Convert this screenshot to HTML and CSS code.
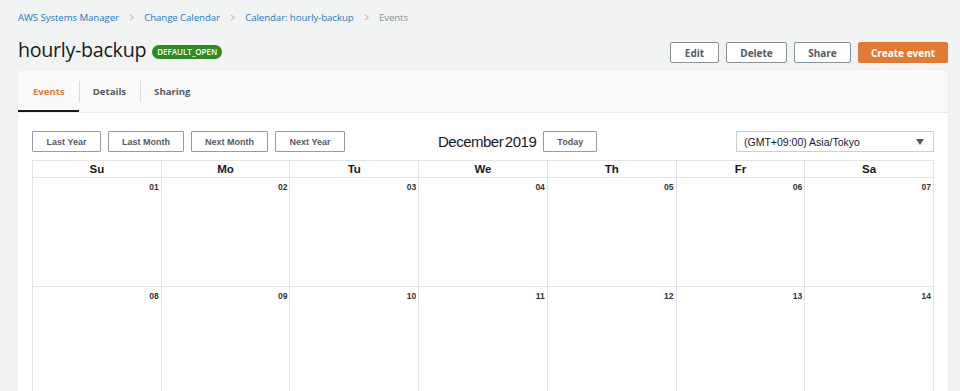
FILE: index.html
```html
<!DOCTYPE html>
<html lang="en">
<head>
    <meta charset="UTF-8">
    <title>hourly-backup - Events</title>
    <link rel="stylesheet" href="styles.css">
</head>
<body>
    <nav class="breadcrumbs">
        <a href="#">AWS Systems Manager</a>
        <span class="crumb-sep">&gt;</span>
        <a href="#">Change Calendar</a>
        <span class="crumb-sep">&gt;</span>
        <a href="#">Calendar: hourly-backup</a>
        <span class="crumb-sep">&gt;</span>
        <span class="crumb-current">Events</span>
    </nav>

    <header class="page-header">
        <div class="title-wrap">
            <h1>hourly-backup</h1>
            <span class="badge">DEFAULT_OPEN</span>
        </div>
        <div class="actions">
            <button class="btn">Edit</button>
            <button class="btn">Delete</button>
            <button class="btn">Share</button>
            <button class="btn btn-primary">Create event</button>
        </div>
    </header>

    <div class="card">
        <div class="tabs">
            <a href="#" class="tab active">Events</a>
            <a href="#" class="tab">Details</a>
            <a href="#" class="tab">Sharing</a>
        </div>

        <div class="card-body">
            <div class="cal-toolbar">
                <div class="nav-buttons">
                    <button class="cal-btn">Last Year</button>
                    <button class="cal-btn">Last Month</button>
                    <button class="cal-btn">Next Month</button>
                    <button class="cal-btn">Next Year</button>
                </div>
                <div class="month-label">
                    <span class="month">December 2019</span>
                    <button class="cal-btn">Today</button>
                </div>
                <div class="tz-select">
                    <span>(GMT+09:00) Asia/Tokyo</span>
                    <span class="caret"></span>
                </div>
            </div>

            <div class="calendar">
                <div class="dow">Su</div>
                <div class="dow">Mo</div>
                <div class="dow">Tu</div>
                <div class="dow">We</div>
                <div class="dow">Th</div>
                <div class="dow">Fr</div>
                <div class="dow">Sa</div>

                <div class="day">01</div>
                <div class="day">02</div>
                <div class="day">03</div>
                <div class="day">04</div>
                <div class="day">05</div>
                <div class="day">06</div>
                <div class="day">07</div>

                <div class="day">08</div>
                <div class="day">09</div>
                <div class="day">10</div>
                <div class="day">11</div>
                <div class="day">12</div>
                <div class="day">13</div>
                <div class="day">14</div>
            </div>
        </div>
    </div>
</body>
</html>
```

FILE: styles.css
```css
body {
    margin: 0;
    padding: 0 12px 0 18px;
    background: #f2f3f3;
    font-family: "Open Sans", Arial, sans-serif;
    color: #16191f;
    overflow: hidden;
}

.breadcrumbs {
    display: flex;
    align-items: center;
    height: 34px;
    font-size: 9.7px;
    letter-spacing: -0.1px;
}
.breadcrumbs a { color: #2a7ac0; text-decoration: none; }
.crumb-sep {
    color: #aab7b8;
    margin: 0 9px;
    font-size: 13px;
    transform: scaleX(0.65);
}
.crumb-current { color: #879596; }

.page-header {
    display: flex;
    justify-content: space-between;
    align-items: flex-end;
    height: 29px;
}
.title-wrap { display: flex; align-items: center; }
h1 {
    margin: 0;
    font-size: 19.7px;
    font-weight: 400;
    letter-spacing: -0.3px;
    line-height: 26px;
}
.badge {
    margin-left: 6px;
    margin-top: 3px;
    background: #2f8a24;
    color: #fff;
    font-size: 8px;
    font-weight: 600;
    padding: 0 5px;
    height: 14px;
    line-height: 14px;
    border-radius: 7px;
}

.actions { display: flex; gap: 7px; }
.btn {
    height: 21px;
    padding: 0;
    background: #fff;
    border: 1px solid #8b9196;
    border-radius: 2px;
    font-family: "Open Sans", Arial, sans-serif;
    font-size: 10px;
    font-weight: 700;
    color: #545b64;
    white-space: nowrap;
}
.actions .btn:nth-child(1) { width: 49px; }
.actions .btn:nth-child(2) { width: 61px; }
.actions .btn:nth-child(3) { width: 57px; }
.btn-primary {
    width: 90px;
    background: #e07a35;
    border-color: #e07a35;
    color: #fff;
}

.card {
    margin-top: 8px;
    background: #fff;
    box-shadow: 0 1px 1px rgba(0, 28, 36, 0.2);
    height: 330px;
}
.tabs {
    display: flex;
    align-items: center;
    height: 41px;
    background: #fafafa;
    border-bottom: 1px solid #eaeded;
}
.tab {
    position: relative;
    display: flex;
    align-items: center;
    height: 41px;
    padding: 0 14px;
    font-size: 9.6px;
    font-weight: 700;
    color: #545b64;
    text-decoration: none;
}
.tab + .tab::before {
    content: "";
    position: absolute;
    left: 0;
    top: 10px;
    bottom: 10px;
    border-left: 1px solid #dadcdc;
}
.tab:first-child { padding: 0 14px 0 15px; }
.tab.active { color: #e07a35; box-shadow: inset 0 -2px 0 #16191f; }

.card-body { padding: 18px 14px 0; }

.cal-toolbar {
    display: flex;
    align-items: center;
    height: 21px;
    margin-bottom: 8px;
}
.nav-buttons { display: flex; gap: 7px; }
.cal-btn {
    height: 21px;
    padding: 0;
    background: #fff;
    border: 1px solid #979ca1;
    border-radius: 1px;
    font-family: "Liberation Sans", Arial, sans-serif;
    font-size: 9px;
    font-weight: 700;
    color: #545b64;
}
.nav-buttons .cal-btn:nth-child(1) { width: 69px; }
.nav-buttons .cal-btn:nth-child(2) { width: 76px; }
.nav-buttons .cal-btn:nth-child(3) { width: 77px; }
.nav-buttons .cal-btn:nth-child(4) { width: 70px; }
.month-label {
    display: flex;
    align-items: center;
    margin-left: 93px;
}
.month {
    font-family: "Liberation Sans", Arial, sans-serif;
    font-size: 15px;
    letter-spacing: -0.5px;
    word-spacing: -2px;
    color: #16191f;
    margin-right: 7px;
}
.month-label .cal-btn { width: 54px; }
.tz-select {
    margin-left: auto;
    width: 198px;
    height: 21px;
    box-sizing: border-box;
    border: 1px solid #c9cfd2;
    display: flex;
    align-items: center;
    justify-content: space-between;
    padding: 0 9px 0 7px;
    font-family: "Liberation Sans", Arial, sans-serif;
    font-size: 10.5px;
    color: #16191f;
}
.caret {
    width: 0;
    height: 0;
    border-left: 4px solid transparent;
    border-right: 4px solid transparent;
    border-top: 6px solid #545b64;
}

.calendar {
    display: grid;
    grid-template-columns: repeat(7, 1fr);
    grid-template-rows: 17px 109px 109px;
    border-top: 1px solid #e4e4e4;
    border-left: 1px solid #e4e4e4;
    font-family: "Liberation Sans", Arial, sans-serif;
}
.dow, .day {
    border-right: 1px solid #e4e4e4;
    border-bottom: 1px solid #e4e4e4;
}
.dow {
    text-align: center;
    font-size: 11.5px;
    font-weight: 700;
    line-height: 16px;
}
.day {
    text-align: right;
    padding: 4px 2px 0 0;
    font-size: 8.5px;
    font-weight: 700;
    color: #333;
}
```
